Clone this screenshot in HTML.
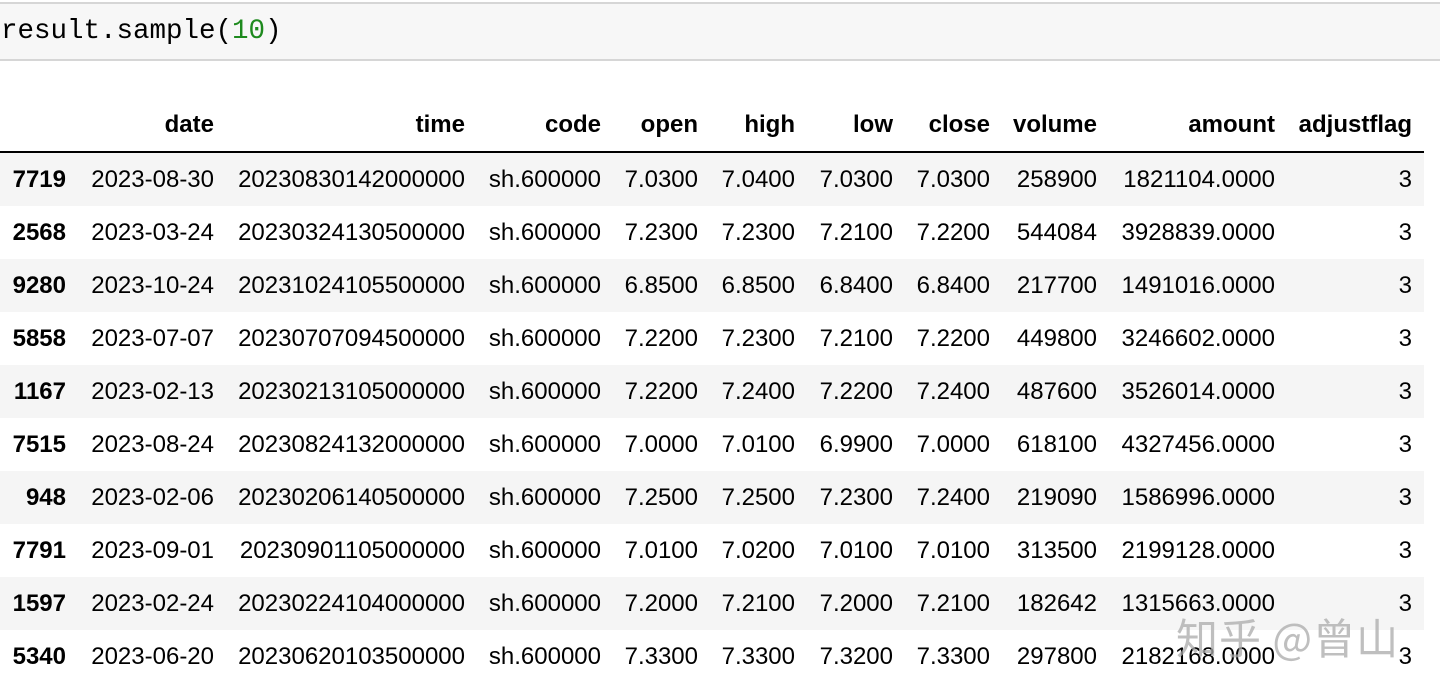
<!DOCTYPE html>
<html><head><meta charset="utf-8"><style>
body{margin:0;width:1440px;height:695px;background:#fff;overflow:hidden;position:relative;font-family:"Liberation Sans",Arial,sans-serif}
.code{position:absolute;left:0;top:2px;width:1440px;height:59px;background:#f7f7f7;border-top:2px solid #d6d6d6;border-bottom:2px solid #d6d6d6;box-sizing:border-box}
.code span.t{position:absolute;left:1px;top:12px;font-family:"Liberation Mono",monospace;font-size:27.5px;color:#000;white-space:pre}
.g{color:#1e8a1e}
table{position:absolute;left:0;top:98px;border-collapse:collapse;table-layout:fixed;width:1424px;font-size:24px;color:#000}
td,th{text-align:right;padding:0;white-space:nowrap;height:53px;vertical-align:middle}
th{font-weight:bold;height:53px}
thead tr{border-bottom:2px solid #000}
tbody tr:nth-child(odd){background:#f5f5f5}
tbody th{font-weight:bold}
.wm{position:absolute;left:1176px;top:606px;font-family:"Noto Sans CJK SC",sans-serif;font-size:42px;color:rgba(170,170,170,0.75);letter-spacing:1px}
</style></head><body>
<div class="code"><span class="t">result.sample(<span class="g">10</span>)</span></div>
<table>
<colgroup><col style="width:66px"><col style="width:148px"><col style="width:251px"><col style="width:136px"><col style="width:97px"><col style="width:97px"><col style="width:98px"><col style="width:97px"><col style="width:107px"><col style="width:178px"><col style="width:137px"><col style="width:12px"></colgroup>
<thead><tr style="height:53px"><th></th><th>date</th><th>time</th><th>code</th><th>open</th><th>high</th><th>low</th><th>close</th><th>volume</th><th>amount</th><th>adjustflag</th><th></th></tr></thead>
<tbody>
<tr><th>7719</th><td>2023-08-30</td><td>20230830142000000</td><td>sh.600000</td><td>7.0300</td><td>7.0400</td><td>7.0300</td><td>7.0300</td><td>258900</td><td>1821104.0000</td><td>3</td><td></td></tr>
<tr><th>2568</th><td>2023-03-24</td><td>20230324130500000</td><td>sh.600000</td><td>7.2300</td><td>7.2300</td><td>7.2100</td><td>7.2200</td><td>544084</td><td>3928839.0000</td><td>3</td><td></td></tr>
<tr><th>9280</th><td>2023-10-24</td><td>20231024105500000</td><td>sh.600000</td><td>6.8500</td><td>6.8500</td><td>6.8400</td><td>6.8400</td><td>217700</td><td>1491016.0000</td><td>3</td><td></td></tr>
<tr><th>5858</th><td>2023-07-07</td><td>20230707094500000</td><td>sh.600000</td><td>7.2200</td><td>7.2300</td><td>7.2100</td><td>7.2200</td><td>449800</td><td>3246602.0000</td><td>3</td><td></td></tr>
<tr><th>1167</th><td>2023-02-13</td><td>20230213105000000</td><td>sh.600000</td><td>7.2200</td><td>7.2400</td><td>7.2200</td><td>7.2400</td><td>487600</td><td>3526014.0000</td><td>3</td><td></td></tr>
<tr><th>7515</th><td>2023-08-24</td><td>20230824132000000</td><td>sh.600000</td><td>7.0000</td><td>7.0100</td><td>6.9900</td><td>7.0000</td><td>618100</td><td>4327456.0000</td><td>3</td><td></td></tr>
<tr><th>948</th><td>2023-02-06</td><td>20230206140500000</td><td>sh.600000</td><td>7.2500</td><td>7.2500</td><td>7.2300</td><td>7.2400</td><td>219090</td><td>1586996.0000</td><td>3</td><td></td></tr>
<tr><th>7791</th><td>2023-09-01</td><td>20230901105000000</td><td>sh.600000</td><td>7.0100</td><td>7.0200</td><td>7.0100</td><td>7.0100</td><td>313500</td><td>2199128.0000</td><td>3</td><td></td></tr>
<tr><th>1597</th><td>2023-02-24</td><td>20230224104000000</td><td>sh.600000</td><td>7.2000</td><td>7.2100</td><td>7.2000</td><td>7.2100</td><td>182642</td><td>1315663.0000</td><td>3</td><td></td></tr>
<tr><th>5340</th><td>2023-06-20</td><td>20230620103500000</td><td>sh.600000</td><td>7.3300</td><td>7.3300</td><td>7.3200</td><td>7.3300</td><td>297800</td><td>2182168.0000</td><td>3</td><td></td></tr>
</tbody></table>
<div class="wm">知乎 @曾山</div>
</body></html>
